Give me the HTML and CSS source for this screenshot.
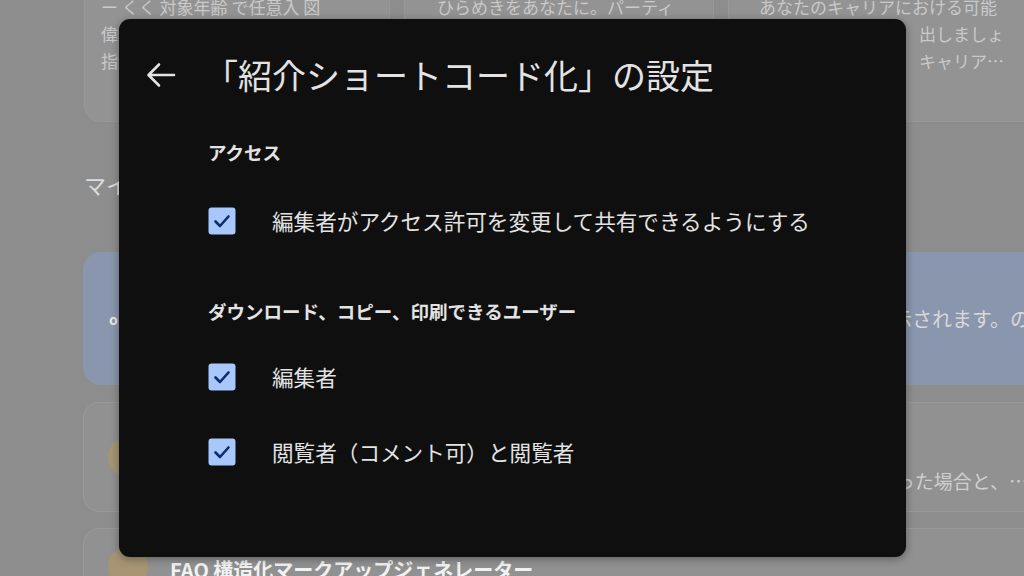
FILE: index.html
```html
<!DOCTYPE html>
<html lang="ja">
<head>
<meta charset="utf-8">
<link rel="stylesheet" href="styles.css">
</head>
<body>
<div class="page">
  <div class="top-row">
    <div class="card">
      <p class="card-line">ー くく 対象年齢 で任意入 図</p>
      <p class="card-line">偉</p>
      <p class="card-line">指</p>
    </div>
    <div class="card card-mid">
      <p class="card-line">ひらめきをあなたに。パーティ</p>
    </div>
    <div class="card card-right">
      <p class="card-line">あなたのキャリアにおける可能</p>
      <p class="card-line align-end">出しましょ</p>
      <p class="card-line align-end2">キャリア…</p>
    </div>
  </div>
  <h2 class="section-title">マイ ジェム</h2>
  <div class="info-card">
    <span class="info-dot">o</span>
    <span class="info-text">示されます。の</span>
  </div>
  <div class="list-card">
    <span class="avatar"></span>
    <span class="list-desc">らった場合と、…</span>
  </div>
  <div class="list-card list-card-last">
    <span class="avatar"></span>
    <span class="list-title">FAQ 構造化マークアップジェネレーター</span>
  </div>
</div>

<div class="dialog">
  <div class="dialog-header">
    <svg class="back-icon" width="30" height="28" viewBox="0 0 30 28">
      <path d="M28 14 H3 M13 3.5 L2.5 14 L13 24.5" fill="none" stroke="#e3e3e3" stroke-width="2.6" stroke-linecap="round" stroke-linejoin="round"/>
    </svg>
    <h1 class="dialog-title">「紹介ショートコード化」の設定</h1>
  </div>
  <div class="dialog-body">
    <div class="group-label first">アクセス</div>
    <label class="row row-1">
      <svg class="checkbox" width="28" height="28" viewBox="0 0 28 28">
        <rect x="0.5" y="0.5" width="27" height="27" rx="3" fill="#a8c7fa"/>
        <path d="M7.5 14.5 L12 19 L20.5 9.5" fill="none" stroke="#0b2d6e" stroke-width="2.6" stroke-linecap="round" stroke-linejoin="round"/>
      </svg>
      <span class="row-text">編集者がアクセス許可を変更して共有できるようにする</span>
    </label>
    <div class="group-label second">ダウンロード、コピー、印刷できるユーザー</div>
    <label class="row row-2">
      <svg class="checkbox" width="28" height="28" viewBox="0 0 28 28">
        <rect x="0.5" y="0.5" width="27" height="27" rx="3" fill="#a8c7fa"/>
        <path d="M7.5 14.5 L12 19 L20.5 9.5" fill="none" stroke="#0b2d6e" stroke-width="2.6" stroke-linecap="round" stroke-linejoin="round"/>
      </svg>
      <span class="row-text">編集者</span>
    </label>
    <label class="row row-3">
      <svg class="checkbox" width="28" height="28" viewBox="0 0 28 28">
        <rect x="0.5" y="0.5" width="27" height="27" rx="3" fill="#a8c7fa"/>
        <path d="M7.5 14.5 L12 19 L20.5 9.5" fill="none" stroke="#0b2d6e" stroke-width="2.6" stroke-linecap="round" stroke-linejoin="round"/>
      </svg>
      <span class="row-text">閲覧者（コメント可）と閲覧者</span>
    </label>
  </div>
</div>
</body>
</html>
```
FILE: styles.css
```css
* { box-sizing: border-box; }
html, body {
  margin: 0;
  padding: 0;
  width: 1024px;
  height: 576px;
  overflow: hidden;
  background: #8d8d8d;
  font-family: "Noto Sans CJK JP", "Noto Sans", sans-serif;
}
.page {
  padding-left: 84px;
  position: relative;
}
.top-row {
  display: grid;
  grid-template-columns: 306px 310px 1fr;
  gap: 14px;
  margin-top: -40px;
  height: 162px;
}
.card {
  background: #939393;
  border: 1px solid #989898;
  border-radius: 16px;
  padding: 32px 14px 0 16px;
  overflow: hidden;
}
.card-mid { padding-left: 32px; }
.card-right { padding-left: 30px; margin-right: -20px; }
.card-line {
  margin: 0;
  font-size: 17px;
  line-height: 27px;
  color: #c9c9c9;
  white-space: nowrap;
}
.align-end { padding-left: 160px; }
.align-end2 { padding-left: 160px; }
.section-title {
  margin: 47px 0 0 0;
  font-size: 22px;
  line-height: 30px;
  font-weight: 400;
  color: #dcdcdc;
}
.info-card {
  margin-top: 53px;
  margin-left: -1px;
  height: 133px;
  background: #8a96ad;
  border-radius: 18px 0 0 18px;
  display: flex;
  align-items: center;
  padding-left: 26px;
  justify-content: space-between;
}
.info-dot {
  color: #e8e8e8;
  font-size: 14px;
  font-weight: 700;
}
.info-text {
  color: #d8d8d8;
  font-size: 20px;
  margin-right: -6px;
  white-space: nowrap;
}
.list-card {
  margin-top: 17px;
  margin-left: -1px;
  height: 110px;
  background: #919191;
  border: 1px solid #999999;
  border-right: none;
  border-radius: 16px 0 0 16px;
  display: flex;
  align-items: center;
  padding-left: 24px;
  position: relative;
}
.avatar {
  width: 40px;
  height: 40px;
  border-radius: 50%;
  background: #a69474;
  flex: none;
}
.list-desc {
  margin-left: auto;
  margin-top: 46px;
  margin-right: -4px;
  color: #cfcfcf;
  font-size: 19px;
  white-space: nowrap;
}
.list-card-last {
  margin-top: 16px;
  align-items: flex-start;
  padding-top: 18px;
}
.list-title {
  margin-left: 22px;
  margin-top: 8px;
  color: #f2f2f2;
  font-size: 20px;
  font-weight: 700;
  white-space: nowrap;
}

.dialog {
  position: absolute;
  left: 119px;
  top: 19px;
  width: 787px;
  height: 538px;
  background: #0f0f0f;
  border-radius: 11px;
  box-shadow: 0 2px 8px rgba(0,0,0,0.35);
  color: #e3e3e3;
}
.dialog-header {
  display: flex;
  align-items: center;
  padding: 36px 0 0 27px;
}
.back-icon {
  flex: none;
  display: block;
}
.dialog-title {
  margin: 0 0 0 28px;
  font-size: 34px;
  line-height: 40px;
  font-weight: 400;
  color: #e3e3e3;
}
.dialog-body {
  padding-left: 89px;
  display: flex;
  flex-direction: column;
  align-items: flex-start;
}
.group-label {
  font-size: 18.5px;
  line-height: 24px;
  font-weight: 700;
  color: #e3e3e3;
}
.group-label.first { margin-top: 45px; }
.group-label.second { margin-top: 54px; }
.row {
  display: flex;
  align-items: center;
  height: 48px;
}
.row-1 { margin-top: 33px; }
.row-2 { margin-top: 30px; }
.row-3 { margin-top: 27px; }
.checkbox {
  flex: none;
  display: block;
}
.row-text {
  margin-left: 36px;
  font-size: 21.6px;
  line-height: 30px;
  color: #e3e3e3;
}
```
